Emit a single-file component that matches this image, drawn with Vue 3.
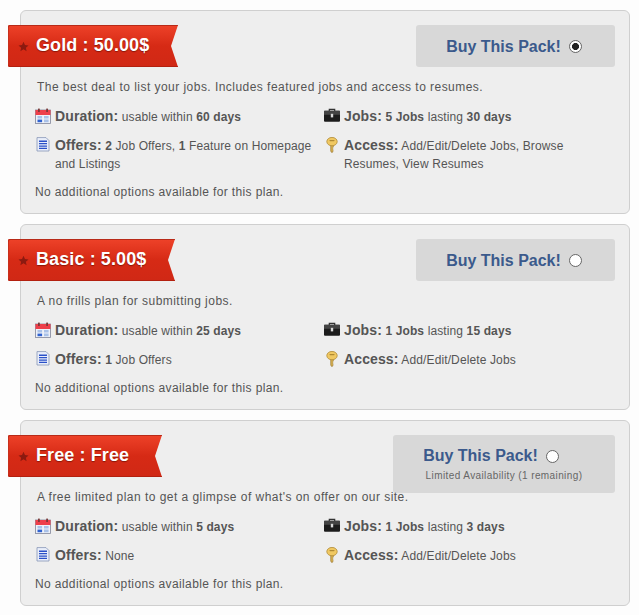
<script setup>
const plans = [
  {
    id: 'gold',
    title: 'Gold : 50.00$',
    width: 170,
    selected: true,
    description: 'The best deal to list your jobs. Includes featured jobs and access to resumes.',
    days: 60,
    jobs: 5,
    lasting: 30,
    offers: [['2', ' Job Offers, '], ['1', ' Feature on Homepage and Listings']],
    access: 'Add/Edit/Delete Jobs, Browse Resumes, View Resumes',
  },
  {
    id: 'basic',
    title: 'Basic : 5.00$',
    width: 167,
    description: 'A no frills plan for submitting jobs.',
    days: 25,
    jobs: 1,
    lasting: 15,
    offers: [['1', ' Job Offers']],
    access: 'Add/Edit/Delete Jobs',
  },
  {
    id: 'free',
    title: 'Free : Free',
    width: 154,
    limited: 'Limited Availability (1 remaining)',
    description: "A free limited plan to get a glimpse of what's on offer on our site.",
    days: 5,
    jobs: 1,
    lasting: 3,
    none: true,
    offers: [],
    access: 'Add/Edit/Delete Jobs',
  },
]
</script>

<template>
  <main class="packs">
    <article v-for="plan in plans" :key="plan.id" class="pack">
      <header class="pack-head">
        <div class="ribbon" :style="{ width: plan.width + 'px' }">
          <svg class="star" viewBox="0 0 12 12"><path d="M6 .8l1.6 3.6 3.9.4-2.9 2.6.8 3.8L6 8.9l-3.4 2.3.8-3.8L.5 4.8l3.9-.4z" /></svg>
          <h2 class="ribbon-title">{{ plan.title }}</h2>
        </div>
        <div class="buy" :class="{ 'buy-limited': plan.limited }">
          <div class="buy-line">
            <span class="buy-text">Buy This Pack!</span>
            <span class="radio" :class="{ checked: plan.selected }"></span>
          </div>
          <p v-if="plan.limited" class="buy-note">{{ plan.limited }}</p>
        </div>
      </header>

      <p class="description">{{ plan.description }}</p>

      <div class="details">
        <div class="detail">
          <svg class="icon" viewBox="0 0 16 16">
            <rect x=".5" y="2" width="15" height="13.5" fill="#eef1f8" stroke="#80859a" stroke-width=".8" />
            <rect x=".5" y="2" width="15" height="5" fill="#ee3f4a" />
            <rect x="3" y=".6" width="1.8" height="3.4" fill="#7d3a3a" />
            <rect x="11.2" y=".6" width="1.8" height="3.4" fill="#7d3a3a" />
            <path d="M2.5 8h4.6v2.6H2.5zM9 8h4.6v2.6H9zM9 11.6h4.6v2.6H9z" fill="#a9c1e8" />
            <path d="M2.5 11.6h4.6v2.6H2.5z" fill="#2f62d0" />
          </svg>
          <p class="detail-text"><strong class="label">Duration:</strong> usable within <b>{{ plan.days }} days</b></p>
        </div>
        <div class="detail">
          <svg class="icon" viewBox="0 0 16 16">
            <path d="M5.3 3V1.4h5.4V3" fill="none" stroke="#333" stroke-width="1.2" />
            <rect x="0" y="2.8" width="16" height="11" rx="1" fill="#1c1c1c" />
            <rect x="0" y="2.8" width="16" height="4" fill="#444" />
            <rect x="6.8" y="5.8" width="2.4" height="3.6" fill="#d8d8d8" />
          </svg>
          <p class="detail-text"><strong class="label">Jobs:</strong> <b>{{ plan.jobs }} Jobs</b> lasting <b>{{ plan.lasting }} days</b></p>
        </div>
        <div class="detail">
          <svg class="icon" viewBox="0 0 16 16">
            <path d="M2 .6h9l3 3V14H2z" fill="#e9eefa" stroke="#8795b5" stroke-width=".8" />
            <path d="M4 3.6h8v1.3H4zM4 6h8v1.3H4zM4 8.4h8v1.3H4zM4 10.8h8v1.3H4z" fill="#2a50c8" />
          </svg>
          <p class="detail-text">
            <strong class="label">Offers:</strong>{{ ' ' }}
            <template v-if="plan.none">None</template>
            <template v-for="offer in plan.offers" :key="offer[0] + offer[1]"><b>{{ offer[0] }}</b>{{ offer[1] }}</template>
          </p>
        </div>
        <div class="detail">
          <svg class="icon" viewBox="0 0 16 16">
            <path d="M8 15.8l-1.3-1.6V8.6h2.6v1.6l-.9.8.9.9-.9.9.9.9z" fill="#c49a3c" stroke="#8d6b22" stroke-width=".5" />
            <ellipse cx="8" cy="4.6" rx="5.2" ry="4.2" fill="#f0c862" stroke="#b08a34" stroke-width=".8" />
            <rect x="5.4" y="2.9" width="5.2" height="1.3" rx=".6" fill="#b08a34" />
            <path d="M8 8.8v5.6" stroke="#e8c468" stroke-width=".7" />
          </svg>
          <p class="detail-text"><strong class="label">Access:</strong> {{ plan.access }}</p>
        </div>
      </div>

      <p class="options">No additional options available for this plan.</p>
    </article>
  </main>
</template>

<style>
html,
body {
  background: #fdfdfd;
}
</style>

<style scoped>
.packs {
  display: flex;
  flex-direction: column;
  gap: 10px;
  width: 639px;
  padding: 10px 9px 0 20px;
  box-sizing: border-box;
  font-family: "Liberation Sans", Arial, sans-serif;
  font-size: 12px;
  color: #555;
}

.pack {
  box-sizing: border-box;
  padding: 14px 14px 13px 14px;
  background: #eeeeee;
  border: 1px solid #cfcfcf;
  border-radius: 6px;
}

.pack-head {
  display: flex;
  justify-content: space-between;
  align-items: flex-start;
  height: 42px;
  margin-left: -27px;
}

/* Cinta roja */
.ribbon {
  display: flex;
  align-items: center;
  box-sizing: border-box;
  height: 42px;
  padding: 0 0 2px 10px;
  background: linear-gradient(to bottom, #ee4229, #d62a15 50%, #d02815);
  border-radius: 2px 0 0 2px;
  box-shadow: inset 0 1px 0 #b82a18, inset 0 -1px 0 #b3200f, inset 1px 0 0 #c8301c;
  clip-path: polygon(0 0, 100% 0, calc(100% - 7px) 50%, 100% 100%, 0 100%);
}

.star {
  width: 11px;
  height: 11px;
  margin-top: 3px;
  fill: #8c1a10;
}

.ribbon-title {
  margin: 0 0 0 7px;
  font-size: 18px;
  font-weight: 700;
  line-height: 1;
  letter-spacing: 0.1px;
  color: #fff;
  text-shadow: 0 1px 1px rgba(90, 10, 0, 0.6);
}

.buy {
  display: flex;
  flex-direction: column;
  align-items: center;
  justify-content: center;
  box-sizing: border-box;
  width: 199px;
  height: 42px;
  padding-top: 1px;
  background: #d8d8d8;
  border-radius: 3px;
}

.buy-limited {
  width: 222px;
  height: 58px;
  padding-top: 0;
}

.buy-line {
  display: flex;
  align-items: center;
  gap: 8px;
  margin-right: 3px;
}

.buy-limited .buy-line {
  margin-right: 26px;
}

.buy-text {
  font-size: 16px;
  font-weight: 700;
  color: #3b5a8c;
}

.radio {
  box-sizing: border-box;
  width: 13px;
  height: 13px;
  background: #fff;
  border: 1px solid #666;
  border-radius: 50%;
}

.radio.checked {
  background: radial-gradient(circle, #222 0 3.2px, #fff 3.8px);
}

.buy-note {
  margin: 5px 0 0;
  font-size: 10px;
  letter-spacing: 0.4px;
  color: #666;
}

.description {
  margin: 13px 0 0 2px;
  line-height: 15px;
  letter-spacing: 0.46px;
}

.details {
  display: grid;
  grid-template-columns: 289px 1fr;
  column-gap: 0;
  row-gap: 11px;
  margin-top: 13px;
}

.detail {
  display: flex;
  gap: 4px;
}

.icon {
  flex: none;
  width: 16px;
  height: 16px;
}

.detail-text {
  margin: 0;
  width: 262px;
  line-height: 18px;
  letter-spacing: 0.12px;
}

.label {
  font-size: 14px;
  line-height: 1;
  color: #555;
}

.detail-text b {
  color: #555;
}

.options {
  margin: 12px 0 0;
  line-height: 15px;
  letter-spacing: 0.37px;
}
</style>
